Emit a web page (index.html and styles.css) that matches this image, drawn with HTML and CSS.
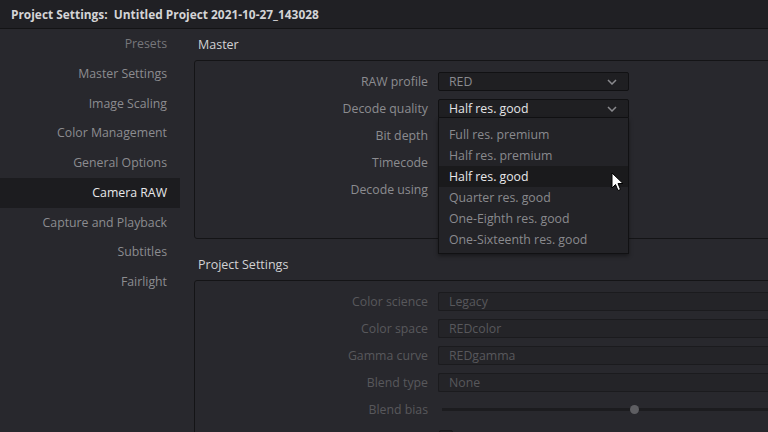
FILE: index.html
```html
<!DOCTYPE html>
<html>
<head>
<meta charset="utf-8">
<link rel="stylesheet" href="styles.css">
</head>
<body>
<div class="app">
  <div class="titlebar">Project Settings:&nbsp; Untitled Project 2021-10-27_143028</div>
  <div class="body">
    <nav class="sidebar">
      <div class="nav-item dim">Presets</div>
      <div class="nav-item">Master Settings</div>
      <div class="nav-item">Image Scaling</div>
      <div class="nav-item">Color Management</div>
      <div class="nav-item">General Options</div>
      <div class="nav-item active">Camera RAW</div>
      <div class="nav-item">Capture and Playback</div>
      <div class="nav-item">Subtitles</div>
      <div class="nav-item">Fairlight</div>
    </nav>
    <main class="main">
      <div class="section-title">Master</div>
      <div class="panel panel-master">
        <div class="row">
          <div class="label">RAW profile</div>
          <div class="select">
            <span class="sel-text">RED</span>
            <svg class="chev" width="10" height="6" viewBox="0 0 10 6"><path d="M1 1 L5 5 L9 1" fill="none" stroke="#8a8a8e" stroke-width="1.5"/></svg>
          </div>
        </div>
        <div class="row">
          <div class="label">Decode quality</div>
          <div class="select-wrap">
            <div class="select open">
              <span class="sel-text bright">Half res. good</span>
              <svg class="chev" width="10" height="6" viewBox="0 0 10 6"><path d="M1 1 L5 5 L9 1" fill="none" stroke="#8a8a8e" stroke-width="1.5"/></svg>
            </div>
            <div class="menu">
              <div class="menu-item">Full res. premium</div>
              <div class="menu-item">Half res. premium</div>
              <div class="menu-item selected">Half res. good</div>
              <div class="menu-item">Quarter res. good</div>
              <div class="menu-item">One-Eighth res. good</div>
              <div class="menu-item">One-Sixteenth res. good</div>
              <svg class="cursor" width="14" height="21" viewBox="0 0 14 21"><path d="M1 1 L1 16 L4.5 12.5 L7 18.5 L9.5 17.5 L7 11.5 L12 11.5 Z" fill="#ffffff" stroke="#000000" stroke-width="1"/></svg>
            </div>
          </div>
        </div>
        <div class="row"><div class="label">Bit depth</div></div>
        <div class="row"><div class="label">Timecode</div></div>
        <div class="row"><div class="label">Decode using</div></div>
      </div>
      <div class="section-title second">Project Settings</div>
      <div class="panel panel-project">
        <div class="row">
          <div class="label off">Color science</div>
          <div class="field">Legacy</div>
        </div>
        <div class="row">
          <div class="label off">Color space</div>
          <div class="field">REDcolor</div>
        </div>
        <div class="row">
          <div class="label off">Gamma curve</div>
          <div class="field">REDgamma</div>
        </div>
        <div class="row">
          <div class="label off">Blend type</div>
          <div class="field">None</div>
        </div>
        <div class="row">
          <div class="label off">Blend bias</div>
          <div class="slider"><div class="track"></div><div class="knob"></div></div>
        </div>
        <div class="row">
          <div class="label off"></div>
          <div class="check-row">
            <div class="checkbox"><svg width="10" height="10" viewBox="0 0 10 10"><path d="M1.5 5 L4 7.5 L8.5 1.5" fill="none" stroke="#55555a" stroke-width="1.5"/></svg></div>
          </div>
        </div>
      </div>
    </main>
  </div>
</div>
</body>
</html>
```
FILE: styles.css
```css
* { box-sizing: border-box; }
html, body {
  margin: 0;
  padding: 0;
  width: 768px;
  height: 432px;
  overflow: hidden;
  background: #28282d;
  font-family: "Open Sans", "Noto Sans", sans-serif;
  font-size: 12.3px;
}
.app {
  width: 768px;
  height: 432px;
  display: flex;
  flex-direction: column;
}
.titlebar {
  height: 29px;
  flex: none;
  background: #202024;
  border-bottom: 1px solid #131315;
  color: #d4d4d6;
  font-weight: 700;
  font-size: 11.9px;
  line-height: 29px;
  padding-left: 11px;
  white-space: pre;
}
.body {
  flex: 1;
  display: flex;
  min-height: 0;
}
.sidebar {
  width: 180px;
  flex: none;
  padding-top: 0;
}
.nav-item {
  height: 29.75px;
  line-height: 29.75px;
  text-align: right;
  padding-right: 13px;
  color: #8c8c90;
}
.nav-item.dim { color: #77777b; }
.nav-item.active {
  background: #1c1c1f;
  color: #e8e8ea;
}
.main {
  margin-left: 14px;
  width: 720px;
  flex: none;
}
.section-title {
  height: 31px;
  line-height: 31px;
  padding-left: 4px;
  color: #d2d2d4;
  font-size: 12.5px;
}
.section-title.second {
  line-height: 33px;
  height: 32px;
}
.panel {
  border: 1px solid #141416;
  border-radius: 3px;
  padding-top: 7px;
}
.panel-master {
  height: 179px;
  margin-bottom: 9px;
}
.row {
  height: 27px;
  display: flex;
  align-items: center;
}
.label {
  width: 233px;
  flex: none;
  text-align: right;
  color: #8c8c90;
  margin-right: 10px;
}
.label.off { color: #58585c; }
.select-wrap {
  position: relative;
}
.select {
  width: 191px;
  height: 19px;
  background: #1f1f22;
  border: 1px solid #111113;
  border-radius: 2px;
  display: flex;
  align-items: center;
  justify-content: space-between;
  padding: 0 10px;
}
.select.open { border-radius: 2px 2px 0 0; }
.sel-text { color: #8a8a8e; }
.sel-text.bright { color: #e4e4e6; }
.chev { margin-right: 1px; }
.menu {
  position: absolute;
  left: 0;
  top: 19px;
  width: 191px;
  height: 136px;
  background: #232327;
  border: 1px solid #111113;
  border-top: none;
  box-shadow: 0 2px 4px rgba(0,0,0,0.4);
  padding-top: 5.5px;
  z-index: 5;
}
.menu-item {
  height: 21.2px;
  line-height: 21.2px;
  padding-left: 10px;
  color: #8a8a8e;
}
.menu-item.selected {
  background: #1a1a1c;
  color: #e8e8ea;
}
.cursor {
  position: absolute;
  left: 172px;
  top: 54px;
}
.panel-project {
  height: 200px;
}
.field {
  flex: 1;
  height: 19px;
  background: #242428;
  border: 1px solid #1b1b1e;
  border-right: none;
  border-radius: 2px 0 0 2px;
  padding-left: 10px;
  line-height: 17px;
  color: #58585c;
}
.slider {
  flex: 1;
  position: relative;
  height: 19px;
}
.track {
  position: absolute;
  left: 4px;
  right: 0;
  top: 8px;
  height: 3px;
  background: #1c1c1f;
}
.knob {
  position: absolute;
  left: 192px;
  top: 5px;
  width: 9px;
  height: 9px;
  border-radius: 50%;
  background: #5e5e62;
}
.check-row {
  display: flex;
  align-items: center;
  gap: 8px;
}
.checkbox {
  width: 14px;
  height: 14px;
  margin-left: 1px;
  border: 1px solid #1a1a1c;
  background: #202023;
  border-radius: 2px;
  display: flex;
  align-items: center;
  justify-content: center;
}
```
